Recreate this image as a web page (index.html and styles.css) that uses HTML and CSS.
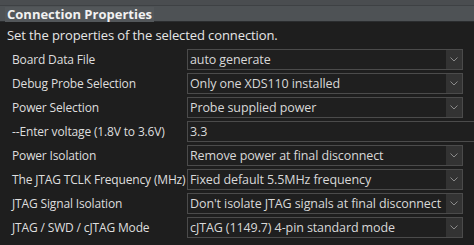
FILE: index.html
```html
<!DOCTYPE html>
<html lang="en">
<head>
  <meta charset="UTF-8">
  <title>Connection Properties</title>
  <link rel="stylesheet" href="styles.css">
</head>
<body>

<div class="topbar"></div>
<div class="section-header">
  <span class="section-title">Connection Properties</span>
</div>

<div class="panel">
  <p class="intro">Set the properties of the selected connection.</p>

  <div class="props">
    <div class="prop">
      <div class="label">Board Data File</div>
      <div class="select"><span class="value">auto generate</span><span class="arrow"><svg width="8" height="5" viewBox="0 0 8 5"><path d="M0.5 0.5 L4 4 L7.5 0.5" fill="none" stroke="#8a8a8a" stroke-width="1"/></svg></span></div>
    </div>
    <div class="prop">
      <div class="label">Debug Probe Selection</div>
      <div class="select"><span class="value">Only one XDS110 installed</span><span class="arrow"><svg width="8" height="5" viewBox="0 0 8 5"><path d="M0.5 0.5 L4 4 L7.5 0.5" fill="none" stroke="#8a8a8a" stroke-width="1"/></svg></span></div>
    </div>
    <div class="prop">
      <div class="label">Power Selection</div>
      <div class="select"><span class="value">Probe supplied power</span><span class="arrow"><svg width="8" height="5" viewBox="0 0 8 5"><path d="M0.5 0.5 L4 4 L7.5 0.5" fill="none" stroke="#8a8a8a" stroke-width="1"/></svg></span></div>
    </div>
    <div class="prop">
      <div class="label">--Enter voltage (1.8V to 3.6V)</div>
      <div class="textbox"><span class="value">3.3</span></div>
    </div>
    <div class="prop">
      <div class="label">Power Isolation</div>
      <div class="select"><span class="value">Remove power at final disconnect</span><span class="arrow"><svg width="8" height="5" viewBox="0 0 8 5"><path d="M0.5 0.5 L4 4 L7.5 0.5" fill="none" stroke="#8a8a8a" stroke-width="1"/></svg></span></div>
    </div>
    <div class="prop">
      <div class="label">The JTAG TCLK Frequency (MHz)</div>
      <div class="select"><span class="value">Fixed default 5.5MHz frequency</span><span class="arrow"><svg width="8" height="5" viewBox="0 0 8 5"><path d="M0.5 0.5 L4 4 L7.5 0.5" fill="none" stroke="#8a8a8a" stroke-width="1"/></svg></span></div>
    </div>
    <div class="prop">
      <div class="label">JTAG Signal Isolation</div>
      <div class="select"><span class="value">Don't isolate JTAG signals at final disconnect</span><span class="arrow"><svg width="8" height="5" viewBox="0 0 8 5"><path d="M0.5 0.5 L4 4 L7.5 0.5" fill="none" stroke="#8a8a8a" stroke-width="1"/></svg></span></div>
    </div>
    <div class="prop">
      <div class="label">JTAG / SWD / cJTAG Mode</div>
      <div class="select"><span class="value">cJTAG (1149.7) 4-pin standard mode</span><span class="arrow"><svg width="8" height="5" viewBox="0 0 8 5"><path d="M0.5 0.5 L4 4 L7.5 0.5" fill="none" stroke="#8a8a8a" stroke-width="1"/></svg></span></div>
    </div>
  </div>
</div>

</body>
</html>
```

FILE: styles.css
```css
body {
  margin: 0;
  padding: 0;
  background-color: #1e1e1e;
  color: #dcdcdc;
  font-family: "Open Sans", "Noto Sans", sans-serif;
  font-size: 12.5px;
  overflow: hidden;
}

/* gray strip above the section title */
.topbar {
  height: 5px;
  background-color: #4a4d50;
  border-bottom: 1px solid #3e4144;
}

.section-header {
  height: 15px;
  background-color: #4e5255;
  border-bottom: 1px solid #2a2c2e;
  padding-left: 5px;
}

.section-title {
  display: inline-block;
  height: 15px;
  line-height: 15px;
  padding: 0 2px;
  background-color: #53575a;
  color: #f2f2f2;
  font-weight: bold;
  font-size: 13px;
}

.panel {
  padding: 0 0 0 7px;
}

.intro {
  margin: 0;
  height: 27px;
  line-height: 26px;
  font-size: 13px;
  letter-spacing: -0.1px;
  color: #e6e6e6;
}

.props {
  display: flex;
  flex-direction: column;
  gap: 3px;
}

.prop {
  display: flex;
  align-items: center;
  height: 21px;
}

.label {
  width: 175px;
  padding-left: 5px;
  flex: none;
  white-space: nowrap;
  font-size: 12px;
  letter-spacing: -0.15px;
  color: #dedede;
}

.select,
.textbox {
  display: flex;
  align-items: center;
  flex: none;
  height: 19px;
  border: 1px solid #4b4b4b;
  background-color: #1f1f1f;
}

.select {
  width: 274px;
}

.textbox {
  width: 300px;
}

.value {
  flex: 1;
  padding-left: 2px;
  white-space: nowrap;
  overflow: hidden;
  letter-spacing: -0.1px;
  color: #d8d8d8;
}

.arrow {
  width: 16px;
  height: 19px;
  display: flex;
  align-items: center;
  justify-content: center;
  background-color: #333333;
}
```
